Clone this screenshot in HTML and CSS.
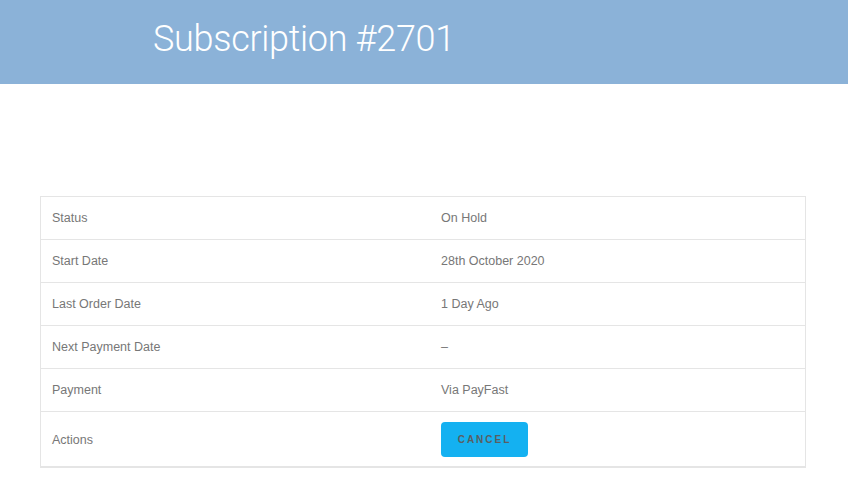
FILE: index.html
```html
<!DOCTYPE html>
<html lang="en">
<head>
  <meta charset="UTF-8" />
  <meta name="viewport" content="width=device-width, initial-scale=1.0" />
  <title>Subscription #2701</title>
  <link rel="stylesheet" href="styles.css">
</head>
<body>
  <header class="page-header">
    <h1 class="page-title">Subscription #2701</h1>
  </header>

  <main class="content">
    <table class="details">
      <tr>
        <td class="label">Status</td>
        <td>On Hold</td>
      </tr>
      <tr>
        <td class="label">Start Date</td>
        <td>28th October 2020</td>
      </tr>
      <tr>
        <td class="label">Last Order Date</td>
        <td>1 Day Ago</td>
      </tr>
      <tr>
        <td class="label">Next Payment Date</td>
        <td>&ndash;</td>
      </tr>
      <tr>
        <td class="label">Payment</td>
        <td>Via PayFast</td>
      </tr>
      <tr class="actions-row">
        <td class="label">Actions</td>
        <td><button class="btn-cancel" type="button">Cancel</button></td>
      </tr>
    </table>
  </main>
</body>
</html>
```

FILE: styles.css
```css
body {
  margin: 0;
  font-family: "Liberation Sans", Arial, sans-serif;
  background: #fff;
}
.page-header {
  background-color: #8bb2d8;
  height: 84px;
  display: flex;
  align-items: center;
  padding-left: 153px;
}
.page-title {
  margin: 0;
  color: #fff;
  font-family: Roboto, sans-serif;
  font-weight: 300;
  font-size: 36px;
  letter-spacing: -0.3px;
  line-height: 1;
  padding-bottom: 6px;
}
.content {
  padding: 112px 42px 0 40px;
}
.details {
  width: 100%;
  table-layout: fixed;
  border-collapse: collapse;
  border: 1px solid #e5e5e5;
  border-bottom-width: 2px;
}
.details td {
  border-top: 1px solid #e5e5e5;
  padding: 11px 11px;
  font-size: 12.5px;
  line-height: 20px;
  color: #777;
  vertical-align: middle;
}
.details td.label {
  width: 367px;
}
.actions-row td {
  padding-top: 10px;
  padding-bottom: 9px;
}
.btn-cancel {
  width: 87px;
  height: 35px;
  background-color: #14b1f1;
  border: none;
  border-radius: 4px;
  color: #5a5f62;
  font-family: "Liberation Sans", Arial, sans-serif;
  font-size: 10px;
  font-weight: bold;
  letter-spacing: 2px;
  text-transform: uppercase;
  cursor: pointer;
}
```
